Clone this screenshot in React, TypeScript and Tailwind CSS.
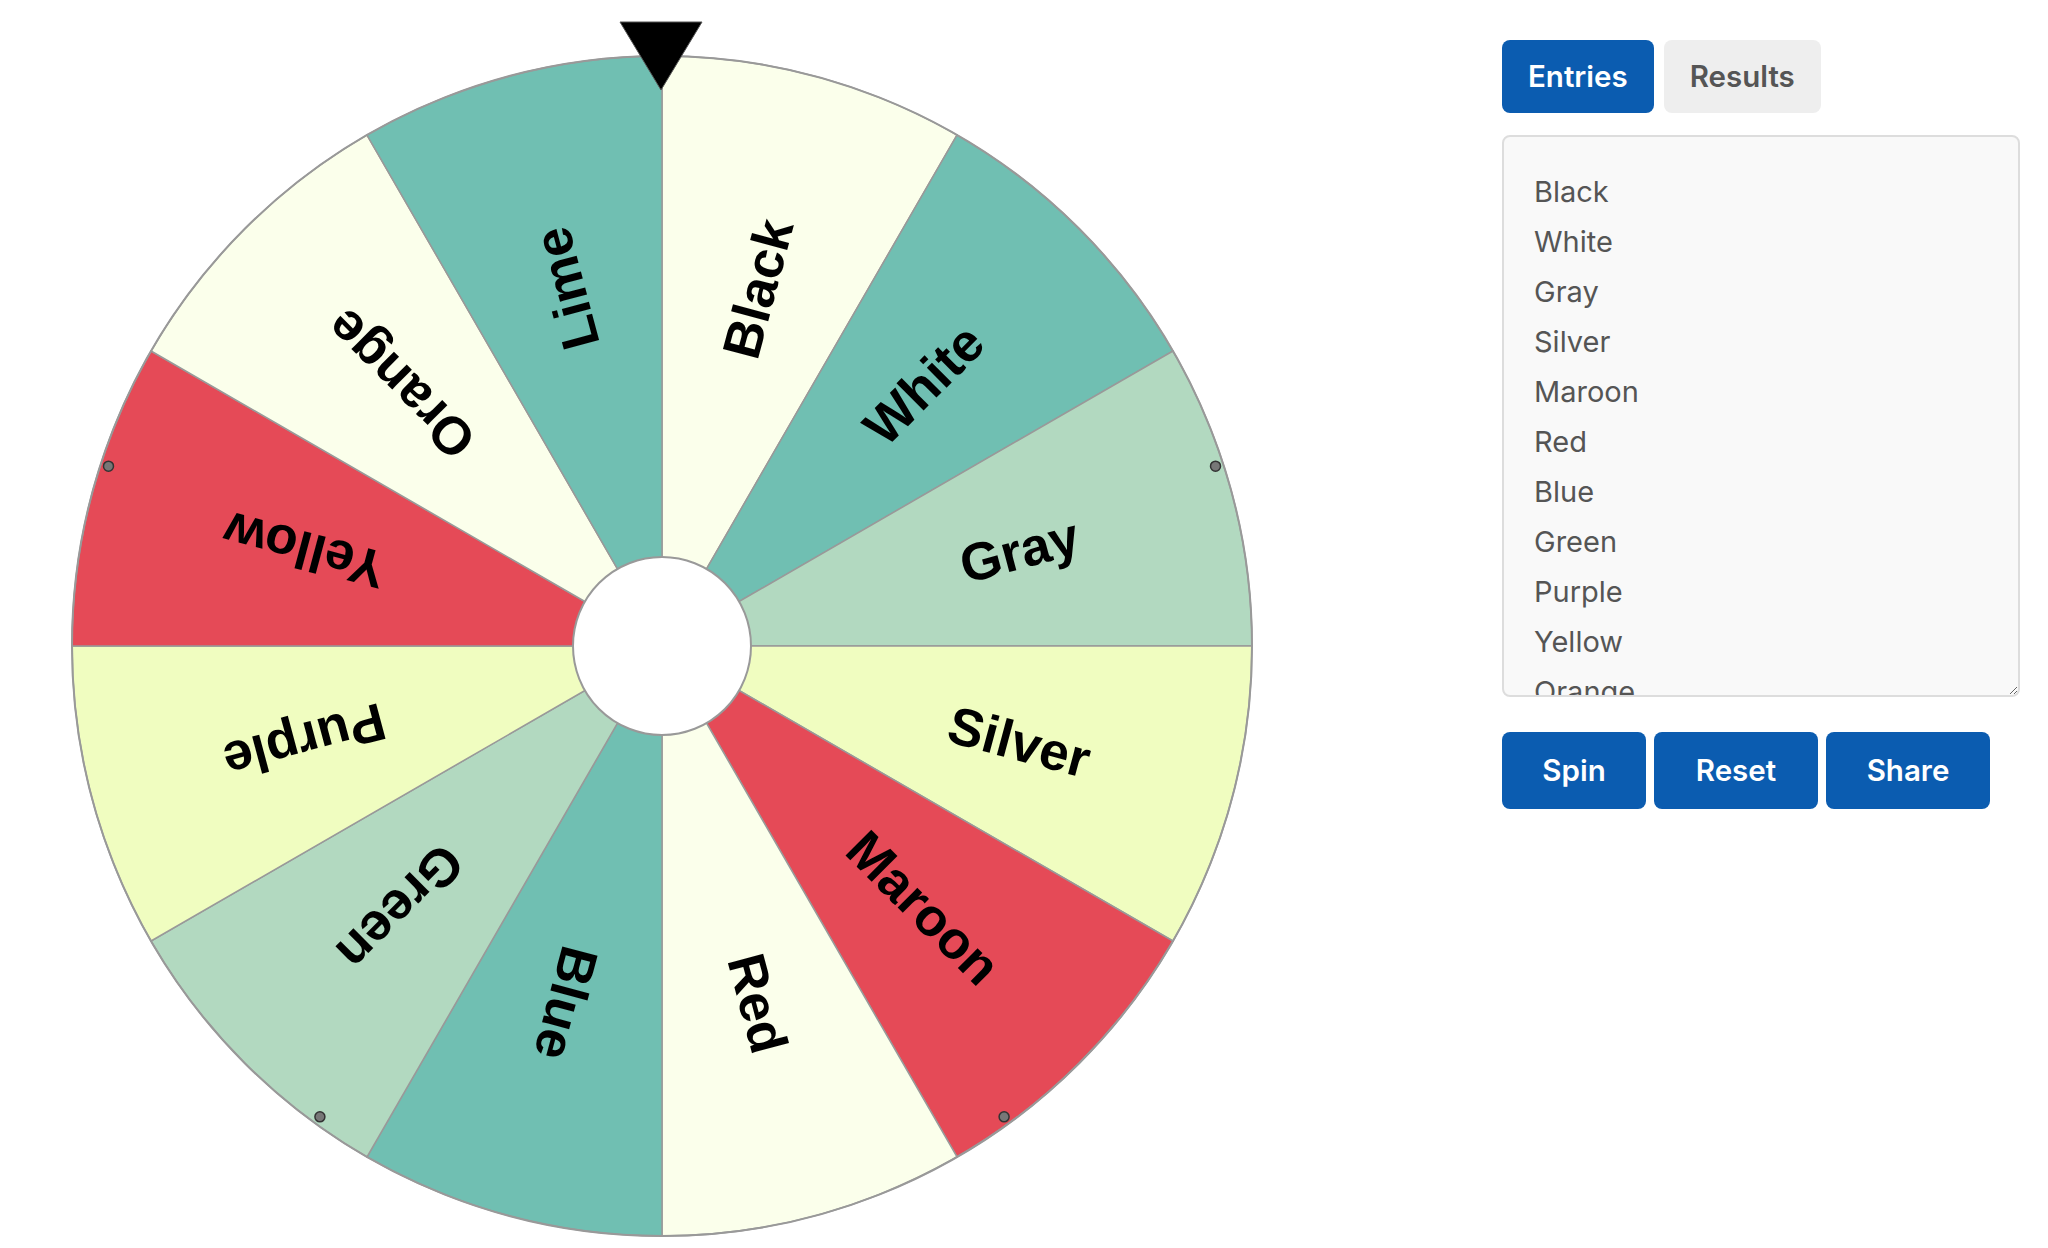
const entries = ["Black", "White", "Gray", "Silver", "Maroon", "Red", "Blue", "Green", "Purple", "Yellow", "Orange", "Lime"];
const colors = ["#fbffeb", "#70bfb2", "#b2d9c0", "#f0fdc0", "#e54a57"];

const CX = 662;
const CY = 646;
const R = 590;

function rad(d: number) {
    return (d * Math.PI) / 180;
}

function Wheel() {
    const step = 360 / entries.length;
    return (
        <svg width={1324} height={1248} className="shrink-0">
            {entries.map((name, i) => {
                const a1 = -90 + step * i;
                const a2 = a1 + step;
                const x1 = CX + R * Math.cos(rad(a1));
                const y1 = CY + R * Math.sin(rad(a1));
                const x2 = CX + R * Math.cos(rad(a2));
                const y2 = CY + R * Math.sin(rad(a2));
                return (
                    <path
                        key={name}
                        d={`M ${CX} ${CY} L ${x1} ${y1} A ${R} ${R} 0 0 1 ${x2} ${y2} Z`}
                        fill={colors[i % colors.length]}
                        stroke="#999"
                        strokeWidth={1.5}
                    />
                );
            })}
            <circle cx={CX} cy={CY} r={R} fill="none" stroke="#999" strokeWidth={2} />
            {entries.map((name, i) => {
                const mid = -90 + step * i + step / 2;
                return (
                    <text
                        key={name}
                        x={CX + 370}
                        y={CY}
                        transform={`rotate(${mid} ${CX} ${CY})`}
                        textAnchor="middle"
                        dominantBaseline="central"
                        fontFamily="'Liberation Sans', Arial, sans-serif"
                        fontWeight={700}
                        fontSize={53}
                        fill="#000"
                    >
                        {name}
                    </text>
                );
            })}
            {[-90, -18, 54, 126, 198].map((a) => (
                <circle
                    key={a}
                    cx={CX + 582 * Math.cos(rad(a))}
                    cy={CY + 582 * Math.sin(rad(a))}
                    r={5}
                    fill="#777"
                    stroke="#333"
                    strokeWidth={1.5}
                />
            ))}
            <circle cx={CX} cy={CY} r={89} fill="#fff" stroke="#999" strokeWidth={2} />
            <polygon points="620,22 702,22 661,90" fill="#000" stroke="#555" strokeWidth={1} />
        </svg>
    );
}

export default function App() {
    return (
        <div className="flex bg-white w-[2048px] h-[1248px] font-['Inter',sans-serif]">
            <Wheel />
            <div className="ml-[178px] pt-10 w-[518px]">
                <div className="flex gap-[10px]">
                    <button className="h-[73px] px-[26px] rounded-lg bg-[#0b5cb0] text-white text-[29.5px] font-semibold">Entries</button>
                    <button className="h-[73px] px-[26px] rounded-lg bg-[#eeeeee] text-[#555] text-[29.5px] font-semibold">Results</button>
                </div>
                <textarea
                    readOnly
                    defaultValue={entries.join("\n")}
                    className="block mt-[22px] w-[518px] h-[562px] p-[30px] border-2 border-[#dddddd] rounded-lg bg-[#f9f9f9] text-[#555] text-[29px] leading-[50px] overflow-hidden outline-none"
                />
                <div className="flex gap-2 mt-[35px]">
                    <button className="h-[77px] w-[144px] rounded-lg bg-[#0b5cb0] text-white text-[29.5px] font-semibold">Spin</button>
                    <button className="h-[77px] w-[164px] rounded-lg bg-[#0b5cb0] text-white text-[29.5px] font-semibold">Reset</button>
                    <button className="h-[77px] w-[164px] rounded-lg bg-[#0b5cb0] text-white text-[29.5px] font-semibold">Share</button>
                </div>
            </div>
        </div>
    );
}
